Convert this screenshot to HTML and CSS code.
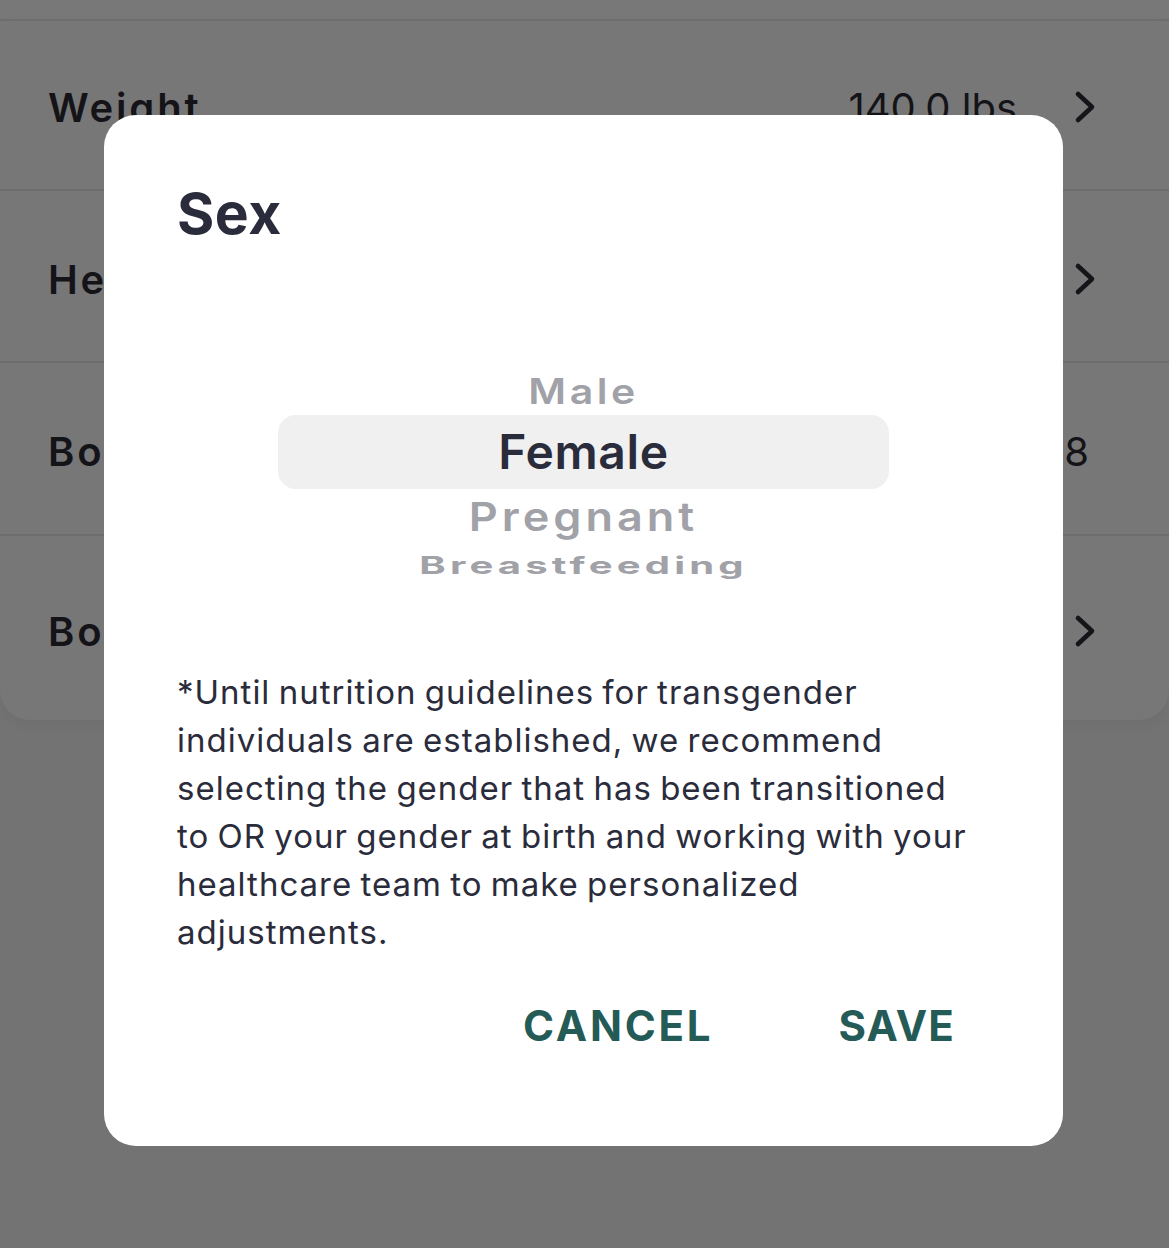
FILE: index.html
```html
<!DOCTYPE html>
<html lang="en">
<head>
<meta charset="utf-8">
<title>Sex</title>
<link rel="stylesheet" href="styles.css">
</head>
<body>
<div class="screen">
  <div class="top-strip"></div>
  <div class="card">
    <div class="row row-first">
      <span class="label">Weight</span>
      <span class="value">140.0 lbs</span>
      <svg class="chev" viewBox="0 0 24 36" width="24" height="36"><polyline points="5,5 19,18 5,31" fill="none" stroke="#151519" stroke-width="4.6" stroke-linecap="round" stroke-linejoin="round"/></svg>
    </div>
    <div class="row">
      <span class="label">Height</span>
      <span class="value">5 ft 6 in</span>
      <svg class="chev" viewBox="0 0 24 36" width="24" height="36"><polyline points="5,5 19,18 5,31" fill="none" stroke="#151519" stroke-width="4.6" stroke-linecap="round" stroke-linejoin="round"/></svg>
    </div>
    <div class="row row-nochev">
      <span class="label">Body Mass Index</span>
      <span class="value">22.8</span>
    </div>
    <div class="row row-last">
      <span class="label">Body Fat</span>
      <span class="value"></span>
      <svg class="chev" viewBox="0 0 24 36" width="24" height="36"><polyline points="5,5 19,18 5,31" fill="none" stroke="#151519" stroke-width="4.6" stroke-linecap="round" stroke-linejoin="round"/></svg>
    </div>
  </div>

  <div class="modal">
    <h2 class="title">Sex</h2>
    <div class="picker">
      <div class="opt opt-male"><span>Male</span></div>
      <div class="opt opt-selected"><span>Female</span></div>
      <div class="opt opt-preg"><span>Pregnant</span></div>
      <div class="opt opt-breast"><span>Breastfeeding</span></div>
    </div>
    <p class="note">*Until nutrition guidelines for transgender individuals are established, we recommend selecting the gender that has been transitioned to OR your gender at birth and working with your healthcare team to make personalized adjustments.</p>
    <div class="actions">
      <button class="btn">CANCEL</button>
      <button class="btn btn-save">SAVE</button>
    </div>
  </div>
</div>
</body>
</html>
```
FILE: styles.css
```css
html, body {
  margin: 0;
  padding: 0;
}
body {
  background: #737373;
  font-family: Inter, "Noto Sans", sans-serif;
  width: 1169px;
  height: 1248px;
  overflow: hidden;
}
.screen {
  position: relative;
  width: 1169px;
  height: 1248px;
}
.top-strip {
  height: 19px;
  background: #787878;
}
.card {
  background: #777777;
  border-top: 2px solid #6d6d6e;
  border-radius: 0 0 30px 30px;
  box-shadow: 0 6px 14px rgba(0,0,0,0.04);
}
.row {
  height: 172px;
  display: flex;
  align-items: center;
  padding: 6px 72px 0 48px;
  box-sizing: border-box;
  border-bottom: 2px solid #6d6d6e;
  color: #141418;
}
.row-first {
  height: 170px;
  padding-top: 4px;
}
.row-nochev {
  height: 173px;
  padding-right: 80px;
}
.row-last {
  height: 184px;
  border-bottom: none;
}
.label {
  font-size: 40px;
  font-weight: 600;
  letter-spacing: 2.8px;
  flex: 1;
}
.value {
  font-size: 40px;
  font-weight: 400;
  margin-right: 56px;
}
.row-nochev .value {
  margin-right: 0;
}
.chev {
  display: block;
}

.modal {
  position: absolute;
  left: 104px;
  top: 115px;
  width: 959px;
  height: 1031px;
  background: #ffffff;
  border-radius: 32px;
  padding: 70px 73px 0 73px;
  box-sizing: border-box;
  color: #2a2c3b;
}
.title {
  margin: 0;
  font-size: 57px;
  line-height: 57px;
  font-weight: 700;
  letter-spacing: 0.5px;
}
.picker {
  margin-top: 125px;
  display: flex;
  flex-direction: column;
  align-items: center;
}
.opt {
  display: flex;
  align-items: center;
  justify-content: center;
  font-weight: 600;
  color: #a1a1a8;
  white-space: nowrap;
}
.opt span {
  display: block;
}
.opt-male {
  height: 48px;
  font-size: 41px;
  line-height: 48px;
  letter-spacing: 3.5px;
}
.opt-male span {
  transform: scaleY(0.86);
}
.opt-selected {
  width: 611px;
  height: 74px;
  border-radius: 18px;
  background: #f0f0f1;
  font-size: 48px;
  line-height: 74px;
  color: #2a2c3b;
  letter-spacing: 0.6px;
}
.opt-preg {
  height: 56px;
  font-size: 45px;
  line-height: 56px;
  letter-spacing: 4px;
}
.opt-preg span {
  transform: scaleY(0.88);
}
.opt-breast {
  height: 41px;
  font-size: 40px;
  line-height: 41px;
  font-weight: 700;
  letter-spacing: 4.2px;
}
.opt-breast span {
  transform: scaleY(0.6);
}
.note {
  margin: 82px 10px 0 0;
  font-size: 33px;
  line-height: 48px;
  font-weight: 400;
  letter-spacing: 1px;
  word-spacing: -2px;
  color: #2a2c3b;
}
.actions {
  margin-top: 40px;
  display: flex;
  justify-content: flex-end;
  gap: 125px;
  padding-right: 35px;
}
.btn {
  border: none;
  background: none;
  padding: 0;
  font-family: Inter, "Noto Sans", sans-serif;
  font-size: 42px;
  line-height: 60px;
  font-weight: 700;
  letter-spacing: 2.8px;
  color: #255b57;
}
.btn-save {
  letter-spacing: 1.2px;
}
```
